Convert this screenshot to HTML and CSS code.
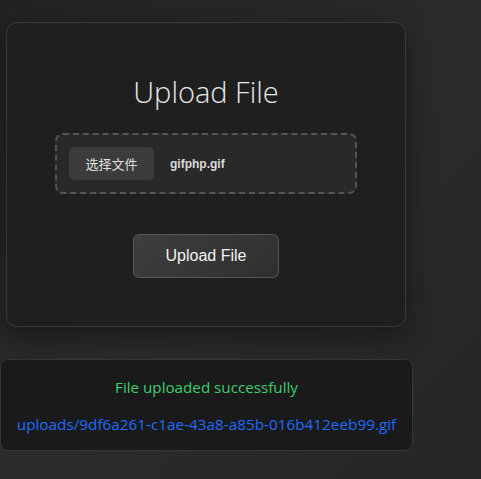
FILE: index.html
```html
<!DOCTYPE html>
<html>
<head>
<meta charset="utf-8">
<link rel="stylesheet" href="styles.css">
</head>
<body>
<main class="page">
  <section class="card">
    <h1 class="title">Upload File</h1>
    <div class="dropzone">
      <span class="choose">选择文件</span>
      <span class="filename">gifphp.gif</span>
    </div>
    <button class="upload-btn" type="button">Upload File</button>
  </section>
  <section class="result">
    <p class="success">File uploaded successfully</p>
    <a class="link" href="#">uploads/9df6a261-c1ae-43a8-a85b-016b412eeb99.gif</a>
  </section>
</main>
</body>
</html>
```

FILE: styles.css
```css
html, body {
  margin: 0;
  padding: 0;
  height: 100%;
}
body {
  background: linear-gradient(135deg, #232323 0%, #2b2b2b 50%, #262626 100%);
  font-family: "Open Sans", "Noto Sans", sans-serif;
  color: #e0e0e0;
  overflow: hidden;
}
.page {
  width: 413px;
  padding-top: 22px;
  display: flex;
  flex-direction: column;
  align-items: flex-start;
}
.card {
  box-sizing: border-box;
  width: 400px;
  height: 305px;
  margin-left: 6px;
  background: #1f1f1f;
  border: 1px solid #3a3a3a;
  border-radius: 11px;
  box-shadow: 0 8px 30px rgba(0,0,0,0.45);
  display: flex;
  flex-direction: column;
  align-items: center;
}
.title {
  margin: 48px 0 0;
  font-weight: 300;
  font-size: 29px;
  line-height: 42px;
  color: #e8e8e8;
}
.dropzone {
  box-sizing: border-box;
  margin-top: 20px;
  width: 302px;
  height: 61px;
  border: 2px dashed #555;
  border-radius: 8px;
  background: #292929;
  display: flex;
  align-items: center;
  padding-left: 12px;
  gap: 16px;
  font-family: "Liberation Sans", "Noto Sans CJK SC", sans-serif;
  font-size: 13px;
}
.choose {
  box-sizing: border-box;
  width: 85px;
  height: 33px;
  border-radius: 5px;
  background: #3c3c3c;
  color: #e0e0e0;
  display: flex;
  align-items: center;
  justify-content: center;
  font-family: "Noto Sans CJK SC", sans-serif;
  font-size: 13px;
}
.filename {
  color: #dcdcdc;
  font-weight: bold;
  font-size: 12px;
}
.upload-btn {
  margin-top: 40px;
  box-sizing: border-box;
  width: 146px;
  height: 44px;
  border: 1px solid #565656;
  border-radius: 6px;
  background: linear-gradient(135deg, #3e3e3e 0%, #2f2f2f 100%);
  color: #f2f2f2;
  font-family: "Liberation Sans", sans-serif;
  font-size: 16px;
  padding: 0;
}
.result {
  box-sizing: border-box;
  margin-top: 32px;
  width: 413px;
  height: 92px;
  background: #1a1a1a;
  border: 1px solid #353535;
  border-radius: 8px;
  display: flex;
  flex-direction: column;
  align-items: center;
}
.success {
  margin: 17px 0 0;
  color: #3ccf6a;
  font-size: 15.2px;
  line-height: 20px;
}
.link {
  margin-top: 17px;
  color: #1f6bff;
  text-decoration: none;
  font-size: 15.3px;
  line-height: 20px;
}
```
